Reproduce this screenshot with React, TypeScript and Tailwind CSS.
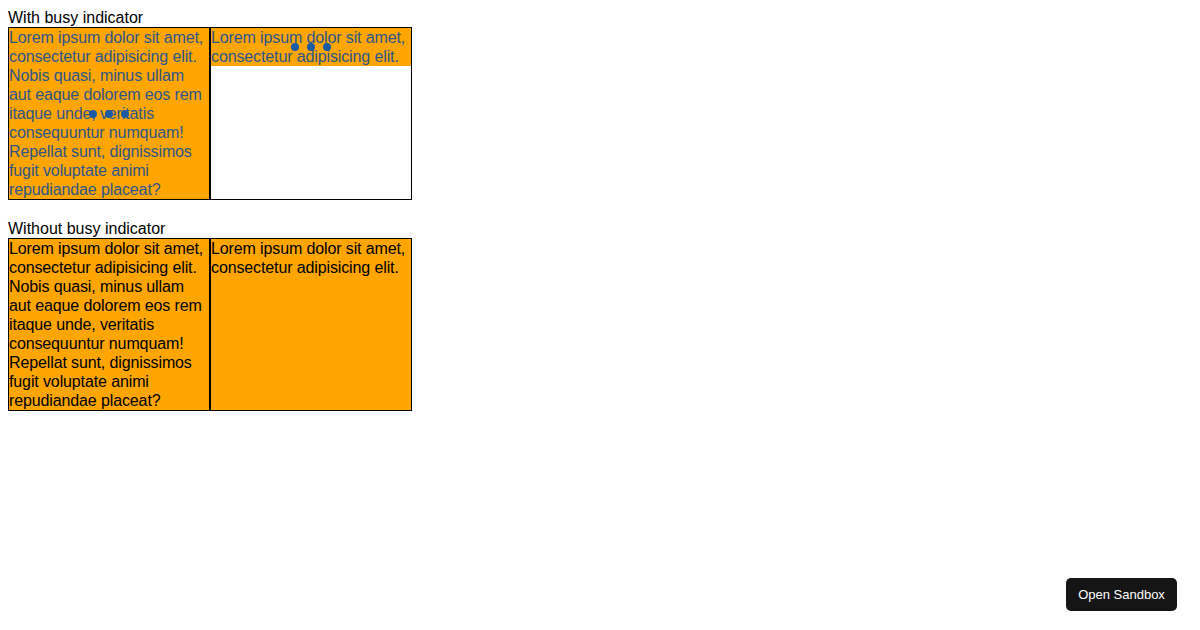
const LONG =
  "Lorem ipsum dolor sit amet, consectetur adipisicing elit. Nobis quasi, minus ullam aut eaque dolorem eos rem itaque unde, veritatis consequuntur numquam! Repellat sunt, dignissimos fugit voluptate animi repudiandae placeat?";
const SHORT = "Lorem ipsum dolor sit amet, consectetur adipisicing elit.";

function Dots() {
  return (
    <div className="absolute inset-0 flex items-center justify-center gap-2 pointer-events-none">
      <span className="w-2 h-2 rounded-full bg-[#1b5ba3]" />
      <span className="w-2 h-2 rounded-full bg-[#1b5ba3]" />
      <span className="w-2 h-2 rounded-full bg-[#1b5ba3]" />
    </div>
  );
}

function Busy({ text }: { text: string }) {
  return (
    <div className="relative bg-[#ffa500] text-[#2f5688]">
      {text}
      <Dots />
    </div>
  );
}

export default function App() {
  return (
    <div className="min-h-screen bg-white p-2 font-['Liberation_Sans',Arial,sans-serif] text-[16px] leading-[19px] text-black">
      <div>With busy indicator</div>
      <div className="flex items-stretch tracking-[-0.12px]">
        <div className="w-[202px] border border-black">
          <Busy text={LONG} />
        </div>
        <div className="w-[202px] border border-black">
          <Busy text={SHORT} />
        </div>
      </div>

      <div className="mt-[19px]">Without busy indicator</div>
      <div className="flex items-stretch tracking-[-0.12px]">
        <div className="w-[202px] border border-black bg-[#ffa500]">{LONG}</div>
        <div className="w-[202px] border border-black bg-[#ffa500]">{SHORT}</div>
      </div>

      <button className="fixed right-[23px] bottom-[19px] h-[33px] w-[111px] rounded-[5px] bg-[#151515] text-white text-[13px] font-['Liberation_Sans',Arial,sans-serif]">
        Open Sandbox
      </button>
    </div>
  );
}
